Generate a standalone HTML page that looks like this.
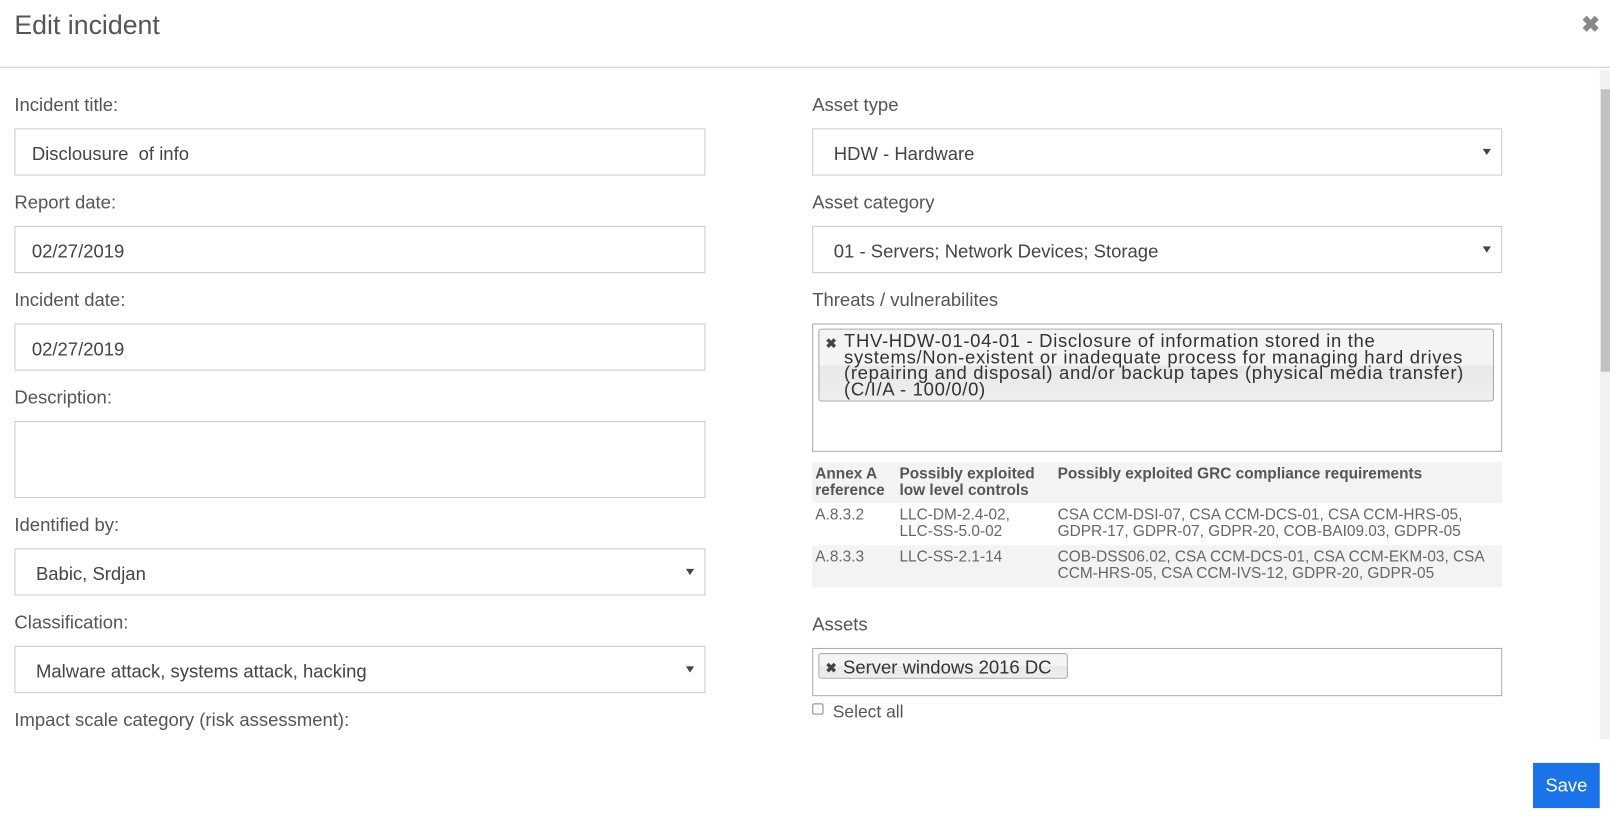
<!DOCTYPE html>
<html><head><meta charset="utf-8"><style>
html,body{margin:0;padding:0;background:#fff;overflow:hidden;width:1610px;height:825px}
#w{position:absolute;left:0;top:0;width:1568px;height:803px;transform:scale(1.0268);transform-origin:0 0;font-family:"Liberation Sans",sans-serif;color:#555}
.a{position:absolute}
.lbl{position:absolute;font-size:18px;color:#555;line-height:20px}
.in{position:absolute;border:1px solid #ccc;box-sizing:border-box;font-size:18px;color:#444;padding-left:16px;padding-top:4px;display:flex;align-items:center;background:#fff}
.sel{padding-left:20px}
.arr{position:absolute;right:10px;top:50%;margin-top:-3px;width:0;height:0;border-left:4px solid transparent;border-right:4px solid transparent;border-top:6px solid #444}
.tag{position:absolute;border:1px solid #aaa;border-radius:3px;background:linear-gradient(#f4f4f4 50%,#e8e8e8 52%,#eee);font-size:18px;color:#333;box-sizing:border-box}
.x{position:absolute;font-size:13px;font-weight:bold;color:#444;letter-spacing:0}
table{border-collapse:collapse;font-size:15px;color:#666;line-height:16px}
td,th{vertical-align:top;text-align:left;padding:4px 3px 0 3px}
th{font-weight:bold;color:#555}
</style></head><body><div id="w">
<div class="a" style="left:14px;top:9px;font-size:26px;color:#555">Edit incident</div>
<div class="a" style="left:1540px;top:11px;font-size:22px;color:#888;font-weight:bold">✖</div>
<div class="a" style="left:0;top:65px;width:1568px;height:1px;background:#ccc"></div>

<div class="lbl" style="left:14px;top:92px">Incident title:</div>
<div class="in" style="left:14px;top:125px;width:673px;height:46px">Disclousure&nbsp; of info</div>
<div class="lbl" style="left:14px;top:187px">Report date:</div>
<div class="in" style="left:14px;top:220px;width:673px;height:46px">02/27/2019</div>
<div class="lbl" style="left:14px;top:282px">Incident date:</div>
<div class="in" style="left:14px;top:315px;width:673px;height:46px">02/27/2019</div>
<div class="lbl" style="left:14px;top:377px">Description:</div>
<div class="in" style="left:14px;top:410px;width:673px;height:75px"></div>
<div class="lbl" style="left:14px;top:501px">Identified by:</div>
<div class="in sel" style="left:14px;top:534px;width:673px;height:46px">Babic, Srdjan<span class="arr"></span></div>
<div class="lbl" style="left:14px;top:596px">Classification:</div>
<div class="in sel" style="left:14px;top:629px;width:673px;height:46px">Malware attack, systems attack, hacking<span class="arr"></span></div>
<div class="lbl" style="left:14px;top:691px">Impact scale category (risk assessment):</div>

<div class="lbl" style="left:791px;top:92px">Asset type</div>
<div class="in sel" style="left:791px;top:125px;width:672px;height:46px">HDW - Hardware<span class="arr"></span></div>
<div class="lbl" style="left:791px;top:187px">Asset category</div>
<div class="in sel" style="left:791px;top:220px;width:672px;height:46px">01 - Servers; Network Devices; Storage<span class="arr"></span></div>
<div class="lbl" style="left:791px;top:282px">Threats / vulnerabilites</div>
<div class="a" style="left:791px;top:315px;width:672px;height:125px;border:1px solid #aaa;box-sizing:border-box"></div>
<div class="tag" style="left:797px;top:320px;width:658px;height:71px;padding:4px 0 0 24px;line-height:15.5px;font-size:18px;white-space:nowrap;letter-spacing:0.65px;overflow:hidden"><span class="x" style="left:6px;top:6px">✖</span>THV-HDW-01-04-01 - Disclosure of information stored in the<br>systems/Non-existent or inadequate process for managing hard drives<br>(repairing and disposal) and/or backup tapes (physical media transfer)<br>(C/I/A - 100/0/0)</div>

<table class="a" style="left:791px;top:450px;width:672px">
<tr style="background:#f3f3f3;height:40px"><th style="width:76px">Annex A reference</th><th style="width:148px">Possibly exploited low level controls</th><th>Possibly exploited GRC compliance requirements</th></tr>
<tr style="height:41px"><td>A.8.3.2</td><td>LLC-DM-2.4-02,<br>LLC-SS-5.0-02</td><td>CSA CCM-DSI-07, CSA CCM-DCS-01, CSA CCM-HRS-05, GDPR-17, GDPR-07, GDPR-20, COB-BAI09.03, GDPR-05</td></tr>
<tr style="background:#f3f3f3;height:41px"><td>A.8.3.3</td><td>LLC-SS-2.1-14</td><td>COB-DSS06.02, CSA CCM-DCS-01, CSA CCM-EKM-03, CSA CCM-HRS-05, CSA CCM-IVS-12, GDPR-20, GDPR-05</td></tr>
</table>

<div class="lbl" style="left:791px;top:598px">Assets</div>
<div class="a" style="left:791px;top:631px;width:672px;height:47px;border:1px solid #aaa;box-sizing:border-box"></div>
<div class="tag" style="left:797px;top:636px;width:243px;height:25px;padding:2px 0 0 23px;line-height:22px"><span class="x" style="left:6px;top:3px">✖</span>Server windows 2016 DC</div>
<div class="a" style="left:791px;top:685px;width:11px;height:11px;border:1px solid #888;border-radius:2px;box-sizing:border-box"></div>
<div class="lbl" style="left:811px;top:684px;font-size:17px">Select all</div>

<div class="a" style="left:1558px;top:68px;width:10px;height:652px;background:#f1f1f1"></div>
<div class="a" style="left:1559px;top:87px;width:9px;height:275px;background:#c1c1c1"></div>

<div class="a" style="left:1493px;top:743px;width:65px;height:44px;background:#1a73e8;color:#fff;font-size:18px;display:flex;align-items:center;justify-content:center">Save</div>
</div></body></html>
